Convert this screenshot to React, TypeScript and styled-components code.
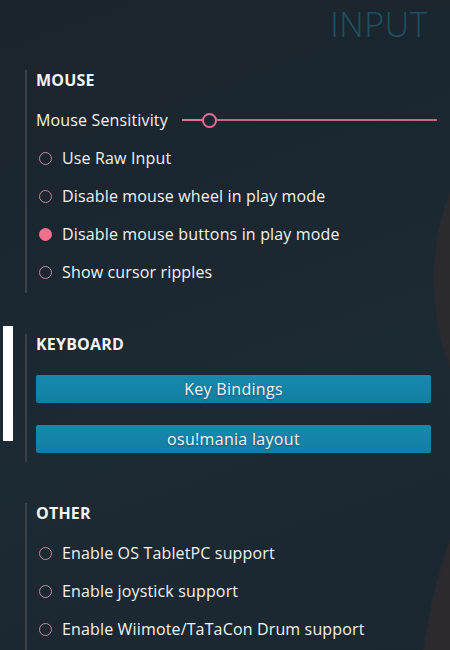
import React from "react";
import styled, { createGlobalStyle } from "styled-components";

const Global = createGlobalStyle`
  html, body {
    margin: 0;
    padding: 0;
    height: 100%;
    background: #1b2630;
  }
  body {
    font-family: "Open Sans", "Liberation Sans", sans-serif;
    color: #f2f2f2;
    overflow: hidden;
  }
`;

const Page = styled.div`
  width: 450px;
  height: 650px;
  box-sizing: border-box;
  overflow: hidden;
  padding: 4px 0 0 25px;
  display: flex;
  flex-direction: column;
  background:
    radial-gradient(circle 246px at 679px 280px, #2b2a2f 99.4%, transparent 100%),
    radial-gradient(circle 537px at 955px 720px, #2c2a2f 99.6%, transparent 100%),
    linear-gradient(160deg, #1a242d 0%, #1c2a33 60%, #1b2730 100%);
`;

const Title = styled.h1`
  margin: 0 22px 0 0;
  align-self: flex-end;
  font-family: "Open Sans", sans-serif;
  font-weight: 300;
  font-size: 34px;
  line-height: 40px;
  letter-spacing: 0.5px;
  color: #1b5266;
`;

const Sections = styled.div`
  display: flex;
  flex-direction: column;
  gap: 41px;
  margin-top: 26px;
`;

const Section = styled.section<{ $bottom: number }>`
  position: relative;
  display: flex;
  flex-direction: column;
  border-left: 2px solid #3a4148;
  padding: 0 0 ${(p) => p.$bottom}px 9px;
`;

const Indicator = styled.div`
  position: absolute;
  left: -24px;
  top: -8px;
  width: 10px;
  height: 115px;
  background: #ffffff;
`;

const Header = styled.h2<{ $gap: number }>`
  margin: 0 0 ${(p) => p.$gap}px 0;
  font-size: 16px;
  line-height: 20px;
  font-weight: 700;
  letter-spacing: 0.2px;
  color: #f4f4f4;
`;

const Row = styled.div`
  height: 38px;
  display: flex;
  align-items: center;
  gap: 10px;
  font-size: 16px;
  letter-spacing: 0.15px;
`;

const SliderRow = styled(Row)`
  gap: 14px;
`;

const Track = styled.div`
  flex: 1;
  margin-right: 13px;
  display: flex;
  align-items: center;
`;

const TrackFill = styled.div`
  width: 20px;
  height: 2px;
  background: #e3708f;
`;

const Thumb = styled.div`
  width: 11px;
  height: 11px;
  border: 2px solid #e3708f;
  border-radius: 50%;
  background: #1b2630;
`;

const TrackRest = styled.div`
  flex: 1;
  height: 1.5px;
  background: #c8667f;
`;

const Check = styled.span<{ $on?: boolean }>`
  box-sizing: border-box;
  margin-left: 3px;
  width: 13px;
  height: 13px;
  border-radius: 50%;
  border: 1.5px solid ${(p) => (p.$on ? "#f26f8d" : "#cc86a0")};
  background: ${(p) => (p.$on ? "#f26f8d" : "transparent")};
  flex-shrink: 0;
`;

const Buttons = styled.div`
  display: flex;
  flex-direction: column;
  gap: 22px;
  margin-right: 19px;
`;

const Button = styled.button`
  height: 28px;
  border: none;
  border-radius: 2px;
  background: linear-gradient(#1689ad, #127fa2);
  color: #f6f6f6;
  font-family: "Open Sans", sans-serif;
  font-size: 16px;
  letter-spacing: 0.3px;
  text-shadow: 0 1px 2px rgba(0, 0, 0, 0.35);
  padding: 0;
`;

const Option = ({ label, on }: { label: string; on?: boolean }) => (
  <Row>
    <Check $on={on} />
    <span>{label}</span>
  </Row>
);

export default function App() {
  return (
    <>
      <Global />
      <Page>
        <Title>INPUT</Title>
        <Sections>
          <Section $bottom={2}>
            <Header $gap={11}>MOUSE</Header>
            <SliderRow>
              <span>Mouse Sensitivity</span>
              <Track>
                <TrackFill />
                <Thumb />
                <TrackRest />
              </Track>
            </SliderRow>
            <Option label="Use Raw Input" />
            <Option label="Disable mouse wheel in play mode" />
            <Option label="Disable mouse buttons in play mode" on />
            <Option label="Show cursor ripples" />
          </Section>
          <Section $bottom={9}>
            <Indicator />
            <Header $gap={21}>KEYBOARD</Header>
            <Buttons>
              <Button>Key Bindings</Button>
              <Button>osu!mania layout</Button>
            </Buttons>
          </Section>
          <Section $bottom={40}>
            <Header $gap={11}>OTHER</Header>
            <Option label="Enable OS TabletPC support" />
            <Option label="Enable joystick support" />
            <Option label="Enable Wiimote/TaTaCon Drum support" />
          </Section>
        </Sections>
      </Page>
    </>
  );
}
